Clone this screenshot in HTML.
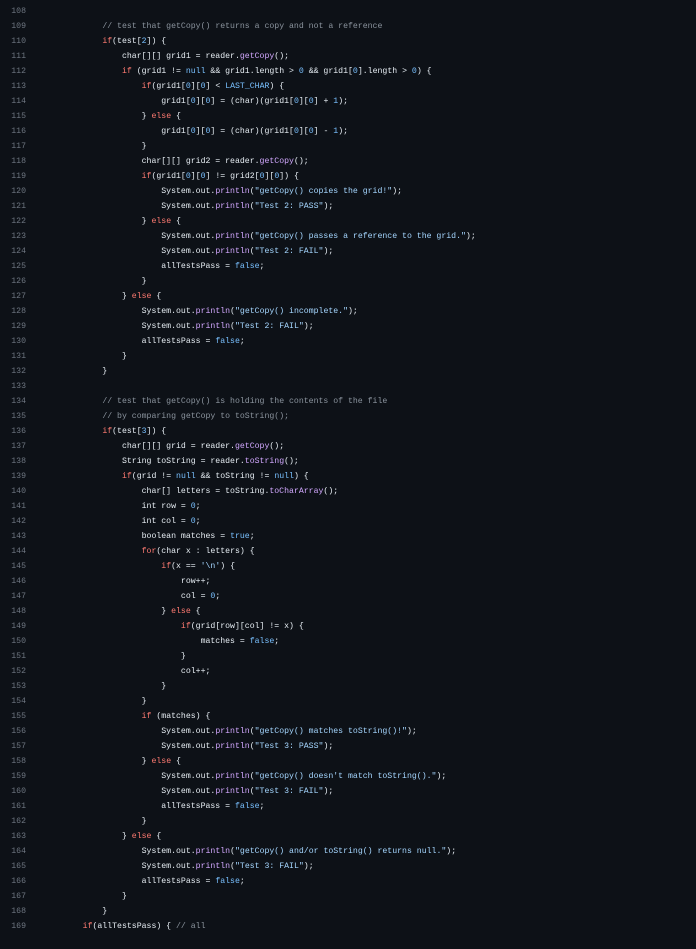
<!DOCTYPE html>
<html><head><meta charset="utf-8"><style>
html,body{margin:0;padding:0;background:#0d1117;width:696px;height:924px;overflow:hidden}
.w{position:absolute;top:-11.5px;left:0;width:696px;height:960px;font-family:"Liberation Mono",monospace;font-size:8.2px;line-height:15.02px;color:#e6edf3}
.n,.c{position:absolute;top:0;white-space:pre;margin:0}
.n{left:0;width:26px;text-align:right;color:#6e7681}
.c{left:63px}
.k{color:#ff7b72}.m{color:#8b949e}.b{color:#79c0ff}.f{color:#d2a8ff}.s{color:#a5d6ff}
</style></head><body>
<div class="w"><div class="n">107
108
109
110
111
112
113
114
115
116
117
118
119
120
121
122
123
124
125
126
127
128
129
130
131
132
133
134
135
136
137
138
139
140
141
142
143
144
145
146
147
148
149
150
151
152
153
154
155
156
157
158
159
160
161
162
163
164
165
166
167
168
169</div><div class="c">        }

        <span class="m">// test that getCopy() returns a copy and not a reference</span>
        <span class="k">if</span>(test[<span class="b">2</span>]) {
            char[][] grid1 = reader.<span class="f">getCopy</span>();
            <span class="k">if</span> (grid1 != <span class="b">null</span> &amp;&amp; grid1.length &gt; <span class="b">0</span> &amp;&amp; grid1[<span class="b">0</span>].length &gt; <span class="b">0</span>) {
                <span class="k">if</span>(grid1[<span class="b">0</span>][<span class="b">0</span>] &lt; <span class="b">LAST_CHAR</span>) {
                    grid1[<span class="b">0</span>][<span class="b">0</span>] = (char)(grid1[<span class="b">0</span>][<span class="b">0</span>] + <span class="b">1</span>);
                } <span class="k">else</span> {
                    grid1[<span class="b">0</span>][<span class="b">0</span>] = (char)(grid1[<span class="b">0</span>][<span class="b">0</span>] - <span class="b">1</span>);
                }
                char[][] grid2 = reader.<span class="f">getCopy</span>();
                <span class="k">if</span>(grid1[<span class="b">0</span>][<span class="b">0</span>] != grid2[<span class="b">0</span>][<span class="b">0</span>]) {
                    System.out.<span class="f">println</span>(<span class="s">"getCopy() copies the grid!"</span>);
                    System.out.<span class="f">println</span>(<span class="s">"Test 2: PASS"</span>);
                } <span class="k">else</span> {
                    System.out.<span class="f">println</span>(<span class="s">"getCopy() passes a reference to the grid."</span>);
                    System.out.<span class="f">println</span>(<span class="s">"Test 2: FAIL"</span>);
                    allTestsPass = <span class="b">false</span>;
                }
            } <span class="k">else</span> {
                System.out.<span class="f">println</span>(<span class="s">"getCopy() incomplete."</span>);
                System.out.<span class="f">println</span>(<span class="s">"Test 2: FAIL"</span>);
                allTestsPass = <span class="b">false</span>;
            }
        }

        <span class="m">// test that getCopy() is holding the contents of the file</span>
        <span class="m">// by comparing getCopy to toString();</span>
        <span class="k">if</span>(test[<span class="b">3</span>]) {
            char[][] grid = reader.<span class="f">getCopy</span>();
            String toString = reader.<span class="f">toString</span>();
            <span class="k">if</span>(grid != <span class="b">null</span> &amp;&amp; toString != <span class="b">null</span>) {
                char[] letters = toString.<span class="f">toCharArray</span>();
                int row = <span class="b">0</span>;
                int col = <span class="b">0</span>;
                boolean matches = <span class="b">true</span>;
                <span class="k">for</span>(char x : letters) {
                    <span class="k">if</span>(x == <span class="s">'\n'</span>) {
                        row++;
                        col = <span class="b">0</span>;
                    } <span class="k">else</span> {
                        <span class="k">if</span>(grid[row][col] != x) {
                            matches = <span class="b">false</span>;
                        }
                        col++;
                    }
                }
                <span class="k">if</span> (matches) {
                    System.out.<span class="f">println</span>(<span class="s">"getCopy() matches toString()!"</span>);
                    System.out.<span class="f">println</span>(<span class="s">"Test 3: PASS"</span>);
                } <span class="k">else</span> {
                    System.out.<span class="f">println</span>(<span class="s">"getCopy() doesn't match toString()."</span>);
                    System.out.<span class="f">println</span>(<span class="s">"Test 3: FAIL"</span>);
                    allTestsPass = <span class="b">false</span>;
                }
            } <span class="k">else</span> {
                System.out.<span class="f">println</span>(<span class="s">"getCopy() and/or toString() returns null."</span>);
                System.out.<span class="f">println</span>(<span class="s">"Test 3: FAIL"</span>);
                allTestsPass = <span class="b">false</span>;
            }
        }
    <span class="k">if</span>(allTestsPass) { <span class="m">// all</span></div></div>
</body></html>
